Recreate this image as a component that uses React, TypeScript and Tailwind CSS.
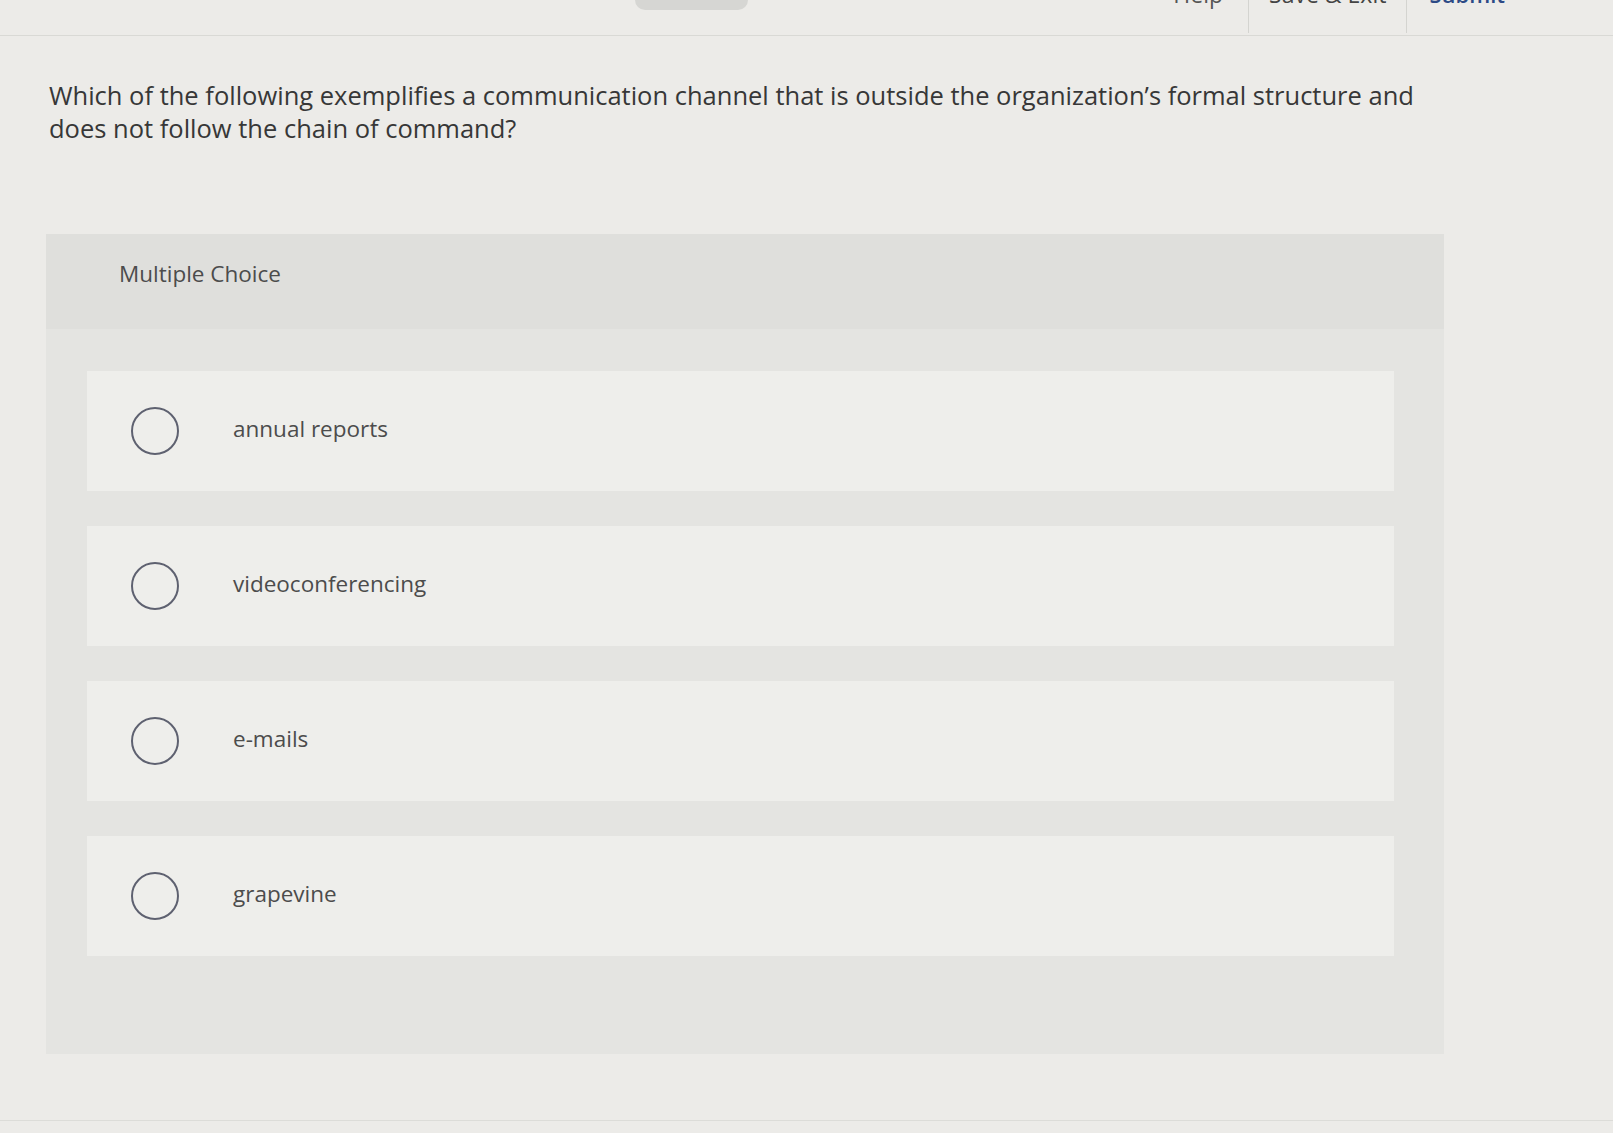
import React from "react";

const options = ["annual reports", "videoconferencing", "e-mails", "grapevine"];

export default function App() {
  return (
    <div
      className="w-full h-[1133px] overflow-hidden bg-[#ecebe8] text-[#3f3f3f] flex flex-col"
      style={{ fontFamily: '"Open Sans", "Liberation Sans", sans-serif' }}
    >
      {/* top bar (cut off by the photo) */}
      <div className="h-[36px] shrink-0 border-b border-[#d9d9d5] flex items-start">
        <div className="w-[635px] shrink-0" />
        <div className="w-[113px] h-[10px] rounded-b-[12px] bg-[#d6d6d3] shrink-0" />
        <div className="flex-1" />
        <div className="flex items-stretch h-[33px] mr-[108px]">
          <div className="overflow-hidden h-[9px] pr-[25px]">
            <span className="block -mt-[18px] text-[23px] leading-[24px] text-[#555]">Help</span>
          </div>
          <div className="w-px bg-[#d4d4d0]" />
          <div className="overflow-hidden h-[9px] px-[20px]">
            <span className="block -mt-[18px] text-[23px] leading-[24px] text-[#444]">Save &amp; Exit</span>
          </div>
          <div className="w-px bg-[#d4d4d0]" />
          <div className="overflow-hidden h-[9px] pl-[22px]">
            <span className="block -mt-[18px] text-[22px] leading-[24px] font-semibold text-[#2c4a86]">Submit</span>
          </div>
        </div>
      </div>

      {/* question */}
      <p className="ml-[49px] mt-[43px] text-[25.5px] leading-[33px] whitespace-nowrap text-[#373737]">
        Which of the following exemplifies a communication channel that is outside the organization’s formal structure and
        <br />
        does not follow the chain of command?
      </p>

      {/* answer panel */}
      <div className="ml-[46px] mt-[89px] w-[1398px] h-[820px] shrink-0 bg-[#e4e4e1] flex flex-col">
        <div className="h-[95px] bg-[#dfdfdc] flex items-center pl-[73px]">
          <span className="text-[22.5px] text-[#4c4c4c] -mt-[15px]">Multiple Choice</span>
        </div>
        <div className="mt-[42px] ml-[41px] mr-[50px] flex flex-col gap-[35px]">
          {options.map((o) => (
            <div key={o} className="h-[120px] bg-[#eeeeeb] flex items-center">
              <div className="ml-[44px] w-[48px] h-[48px] rounded-full border-2 border-[#5e6170] shrink-0" />
              <span className="ml-[54px] text-[22.5px] text-[#4c4c4c] -mt-[4px]">{o}</span>
            </div>
          ))}
        </div>
      </div>

      <div className="flex-1" />
      <div className="h-px bg-[#dcdcd8] mb-[12px]" />
    </div>
  );
}
